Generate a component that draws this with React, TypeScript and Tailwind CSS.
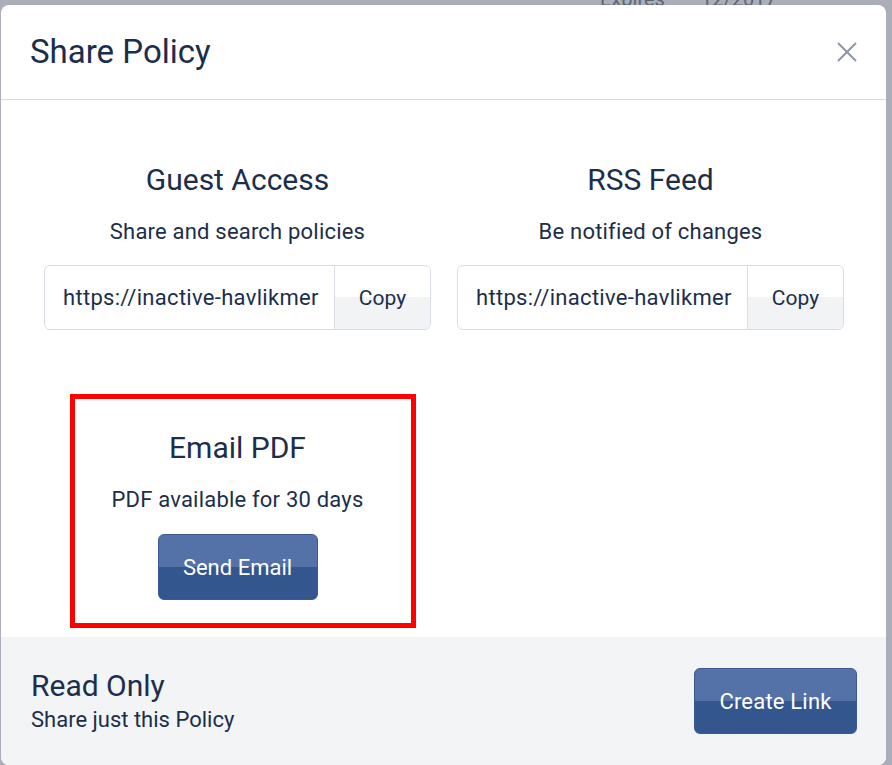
import React from "react";

const font = { fontFamily: "Roboto, 'Noto Sans', sans-serif" };

function LinkBox({ title, subtitle, url }: { title: string; subtitle: string; url: string }) {
  return (
    <div className="flex flex-col items-center">
      <h3 className="text-[30px] leading-[34px] text-[#1c2e4b]">{title}</h3>
      <p className="mt-[23px] text-[22px] leading-[24px] tracking-[0.2px] text-[#1c2e4b]">{subtitle}</p>
      <div className="mt-[21px] flex h-[65px] w-full rounded-[6px] border border-[#d9dee6]">
        <div className="flex min-w-0 flex-1 items-center pl-[18px] pr-[12px]">
          <span className="overflow-hidden whitespace-nowrap text-[22px] tracking-[0.3px] text-[#1c2e4b]">{url}</span>
        </div>
        <button className="w-[96px] shrink-0 rounded-r-[6px] border-l border-[#d9dee6] bg-[linear-gradient(to_bottom,#ffffff_50%,#f2f3f5_50%)] pt-[2px] text-[21px] text-[#1c2e4b]">
          Copy
        </button>
      </div>
    </div>
  );
}

export default function App() {
  return (
    <div
      className="relative h-[765px] w-[892px] overflow-hidden bg-[#a9aeb8] pl-[1px] pr-[6px] pt-[5px]"
      style={font}
    >
      {/* page text behind the modal */}
      <div className="absolute left-[600px] top-[-16px] flex gap-[36px] text-[20px] text-[#5d6575]">
        <span>Expires</span>
        <span>12/2017</span>
      </div>

      <div className="relative flex h-[760px] flex-col overflow-hidden rounded-[8px] bg-white">
        {/* Header */}
        <div className="flex h-[95px] items-center justify-between border-b border-[#d6dae0] pl-[29px] pr-[29px]">
          <h2 className="text-[33px] leading-[40px] text-[#1c2e4b]">Share Policy</h2>
          <button className="p-0">
            <svg width="20" height="20" viewBox="0 0 20 20" fill="none" stroke="#8d96a4" strokeWidth="2">
              <path d="M1 1L19 19M19 1L1 19" />
            </svg>
          </button>
        </div>

        {/* Body */}
        <div className="flex-1 pl-[43px] pr-[42px] pt-[63px]">
          <div className="grid grid-cols-2 gap-x-[26px]">
            <LinkBox title="Guest Access" subtitle="Share and search policies" url="https://inactive-havlikmer" />
            <LinkBox title="RSS Feed" subtitle="Be notified of changes" url="https://inactive-havlikmer" />
          </div>

          <div className="ml-[26px] mt-[64px] flex w-[346px] flex-col items-center border-[5px] border-[#ff0000] pb-[23px] pr-[11px] pt-[32px]">
            <h3 className="text-[30px] leading-[34px] text-[#1c2e4b]">Email PDF</h3>
            <p className="mt-[23px] text-[22px] leading-[24px] tracking-[0.2px] text-[#1c2e4b]">PDF available for 30 days</p>
            <button className="mt-[22px] h-[66px] w-[160px] rounded-[6px] border border-[#3a5a92] bg-[linear-gradient(to_bottom,#5472a7_50%,#34568f_50%)] text-[22px] text-white">
              Send Email
            </button>
          </div>
        </div>

        {/* Footer */}
        <div className="flex h-[128px] items-center justify-between bg-[#f3f4f6] pl-[30px] pr-[29px]">
          <div className="flex flex-col">
            <span className="text-[30px] leading-[34px] text-[#1c2e4b]">Read Only</span>
            <span className="mt-[3px] text-[22px] leading-[28px] text-[#1c2e4b]">Share just this Policy</span>
          </div>
          <button className="h-[66px] w-[163px] rounded-[6px] border border-[#3a5a92] bg-[linear-gradient(to_bottom,#5472a7_50%,#34568f_50%)] text-[22px] tracking-[0.2px] text-white">
            Create Link
          </button>
        </div>
      </div>
    </div>
  );
}
